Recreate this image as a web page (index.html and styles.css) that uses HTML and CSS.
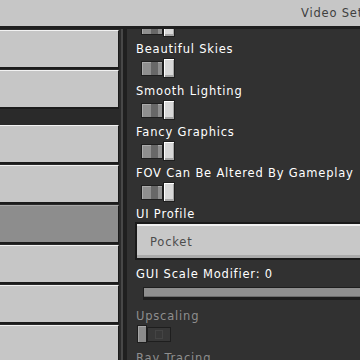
FILE: index.html
```html
<!DOCTYPE html>
<html lang="en">
<head>
<meta charset="utf-8">
<title>Video Settings</title>
<link rel="stylesheet" href="styles.css">
</head>
<body>
<div class="screen">
  <header class="topbar"><span class="title">Video Settings</span></header>
  <div class="main">
    <nav class="sidebar">
      <div class="group">
        <div class="tab"></div>
        <div class="tab"></div>
      </div>
      <div class="group group-second">
        <div class="tab"></div>
        <div class="tab"></div>
        <div class="tab selected"></div>
        <div class="tab"></div>
        <div class="tab"></div>
        <div class="tab"></div>
      </div>
    </nav>
    <div class="divider"></div>
    <section class="panel">
      <div class="content">
        <div class="toggle on first"><span class="track"><span class="mark"></span></span><span class="knob"></span></div>

        <div class="setting">
          <div class="label">Beautiful Skies</div>
          <div class="toggle on"><span class="track"><span class="mark"></span></span><span class="knob"></span></div>
        </div>

        <div class="setting">
          <div class="label">Smooth Lighting</div>
          <div class="toggle on"><span class="track"><span class="mark"></span></span><span class="knob"></span></div>
        </div>

        <div class="setting">
          <div class="label">Fancy Graphics</div>
          <div class="toggle on"><span class="track"><span class="mark"></span></span><span class="knob"></span></div>
        </div>

        <div class="setting">
          <div class="label">FOV Can Be Altered By Gameplay</div>
          <div class="toggle on"><span class="track"><span class="mark"></span></span><span class="knob"></span></div>
        </div>

        <div class="setting">
          <div class="label">UI Profile</div>
          <div class="dropdown"><span class="dropdown-text">Pocket</span></div>
        </div>

        <div class="setting setting-gui">
          <div class="label">GUI Scale Modifier: 0</div>
          <div class="slider"></div>
        </div>

        <div class="setting setting-up">
          <div class="label disabled">Upscaling</div>
          <div class="toggle off"><span class="knob"></span><span class="track"><span class="mark"></span></span></div>
        </div>

        <div class="setting setting-ray">
          <div class="label disabled">Ray Tracing</div>
        </div>
      </div>
    </section>
  </div>
</div>
</body>
</html>
```
FILE: styles.css
```css
* { box-sizing: border-box; }

html, body {
  margin: 0;
  padding: 0;
  width: 360px;
  height: 360px;
  overflow: hidden;
  background: #313131;
  font-family: "DejaVu Sans", sans-serif;
}

.screen {
  width: 360px;
  height: 360px;
  display: flex;
  flex-direction: column;
  overflow: hidden;
}

.topbar {
  height: 29px;
  flex: none;
  background: #c6c6c6;
  border-bottom: 3px solid #1f1f1f;
  padding: 7px 0 0 301px;
  white-space: nowrap;
  overflow: hidden;
}

.title {
  display: block;
  font-size: 11.5px;
  line-height: 13px;
  letter-spacing: 0.8px;
  color: #404040;
}

.main {
  flex: 1;
  display: flex;
  min-height: 0;
}

.sidebar {
  width: 121px;
  flex: none;
  background: #2a2a2a;
  padding-top: 1px;
}

.group-second { margin-top: 16px; }

.tab {
  width: 119px;
  height: 39px;
  margin-bottom: 1px;
  background: #c6c6c6;
  border-top: 1px solid #f2f2f2;
  border-bottom: 2px solid #1b1b1b;
  border-right: 1px solid #1b1b1b;
}

.tab.selected {
  background: #8d8d8d;
  border-top-color: #a8a8a8;
}

.divider {
  width: 6px;
  flex: none;
  background: #1f1f1f;
  border-left: 2px solid #474747;
}

.panel {
  flex: 1;
  overflow: hidden;
  padding-left: 9px;
  background: #313131;
}

.content {
  display: flex;
  flex-direction: column;
  align-items: flex-start;
}

.label {
  font-size: 11.5px;
  line-height: 13px;
  letter-spacing: 0.8px;
  color: #ffffff;
  white-space: nowrap;
}

.label.disabled { color: #8e8e8e; }

.setting { margin-top: 6.25px; }
.setting-gui { margin-top: 8px; }
.setting-up { margin-top: 10px; }
.setting-ray { margin-top: 8px; }

/* toggles */
.toggle {
  display: flex;
  align-items: flex-start;
  width: 34px;
  height: 20px;
  margin-top: 2px;
  margin-left: 5px;
}

.toggle.first { margin-top: -12px; }

.toggle .track {
  display: flex;
  height: 15px;
  margin-top: 3px;
  border: 1px solid #1e1e1e;
}

.toggle.on .track {
  width: 22px;
  background: #8f8f8f;
  padding-left: 9px;
  box-shadow: inset 1px 1px 0 #ababab;
}

.toggle.on .mark {
  width: 7px;
  height: 100%;
  background: #686868;
}

.toggle.on .knob {
  width: 12px;
  height: 20px;
  background: #d8d8d8;
  border: 1px solid #1e1e1e;
  box-shadow: inset 1px 1px 0 #ffffff, inset -1px -2px 0 #a6a6a6;
}

.toggle.off {
  margin-left: 1px;
  width: 35px;
  height: 19px;
}

.toggle.off .knob {
  width: 10px;
  height: 18px;
  background: #8c8c8c;
  border: 1px solid #1e1e1e;
  box-shadow: inset 1px 1px 0 #a6a6a6;
}

.toggle.off .track {
  width: 24px;
  margin-top: 2px;
  background: #383838;
  padding: 2px 0 0 7px;
}

.toggle.off .mark {
  width: 8px;
  height: 9px;
  border: 1px solid #444444;
}

/* dropdown */
.dropdown {
  display: flex;
  align-items: center;
  width: 232px;
  height: 38px;
  margin-top: 1px;
  margin-left: -1px;
  padding: 2px 0 0 13px;
  background: #c8c8c8;
  border: 2px solid #1a1a1a;
  box-shadow: inset 0 2px 0 #f0f0f0, inset 0 -3px 0 #ababab;
}

.dropdown-text {
  font-size: 11.5px;
  line-height: 13px;
  letter-spacing: 0.8px;
  color: #4c4c4c;
}

/* slider */
.slider {
  width: 230px;
  height: 13px;
  margin-top: 6px;
  margin-left: 7px;
  background: #8f8f8f;
  border-top: 1px solid #1e1e1e;
  border-left: 1px solid #1e1e1e;
  border-bottom: 3px solid #1e1e1e;
  box-shadow: inset 0 -1px 0 #6c6c6c;
}
```
